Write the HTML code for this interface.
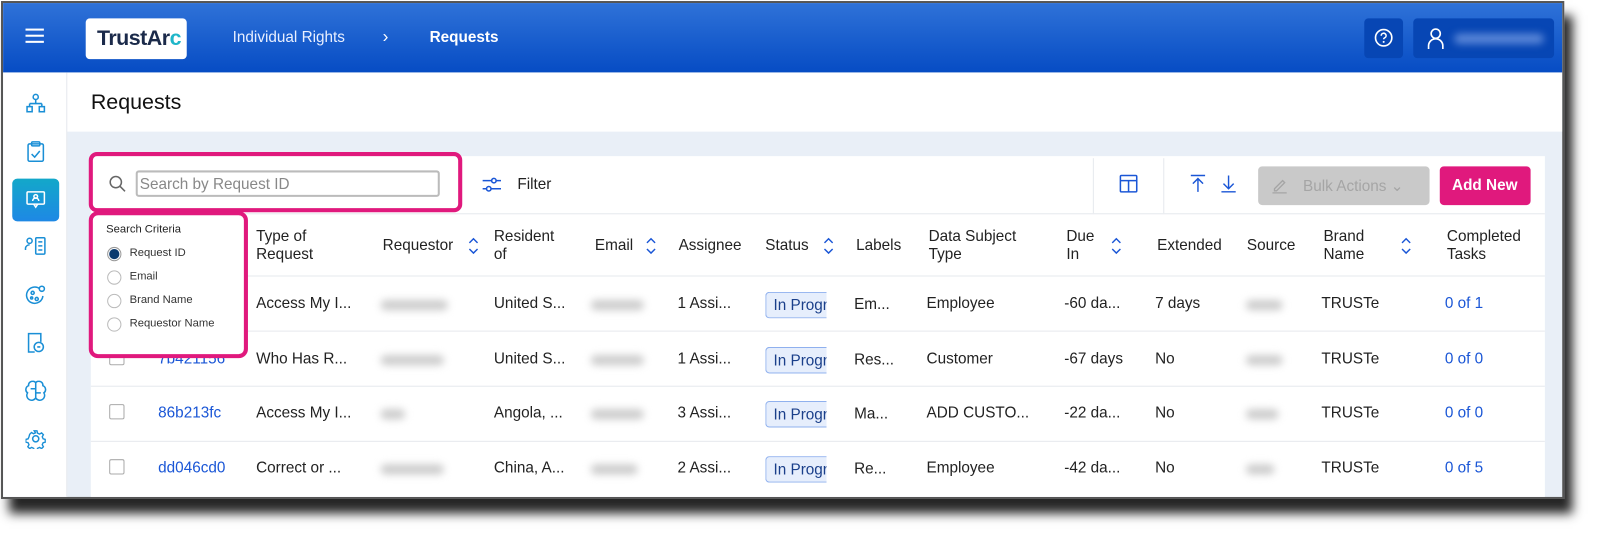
<!DOCTYPE html>
<html><head><meta charset="utf-8"><style>
*{box-sizing:border-box;margin:0;padding:0}
body{width:1600px;height:533px;background:#fff;font-family:"Liberation Sans",sans-serif;position:relative;overflow:hidden;color:#222}
#s{position:absolute;left:0;top:0;width:1568px;height:523px;transform:scale(1.0204);transform-origin:0 0}
.win{position:absolute;left:1px;top:1px;width:1532px;height:488px;background:#e9eff7;border:2px solid #555;box-shadow:8px 14px 10px rgba(0,0,0,.85);overflow:hidden}
.hdr{position:absolute;left:0;top:0;width:100%;height:68px;background:linear-gradient(#2f72d8,#064cc4)}
.a{position:absolute;white-space:nowrap}
.side{position:absolute;left:0;top:68px;width:63px;height:420px;background:#fff;border-right:1px solid #e2e6ec}
.ttl{position:absolute;left:63px;top:68px;right:0;height:58px;background:#fff}
.card{position:absolute;left:86px;top:150px;width:1425px;height:340px;background:#fff}
.row{position:absolute;left:86px;width:1425px;border-top:1px solid #e6e9ee}
.t{font-size:15px;color:#222}
.h{font-size:15px;color:#222;line-height:18px}
.lk{color:#1a56d6}
.blur{position:absolute;height:10px;background:#ccc;filter:blur(4px);border-radius:5px}
.pill{position:absolute;width:60px;height:26px;border:1px solid #8fb0ee;border-right:none;background:#e6eefc;border-radius:4px 0 0 4px;color:#1a3f8a;font-size:15px;padding:4px 0 0 7px;overflow:hidden;white-space:nowrap}
.cb{position:absolute;left:104px;width:15px;height:15px;border:1px solid #aaa;border-radius:2px;background:#fff}
.rad{position:absolute;left:102px;width:14px;height:14px;border:1px solid #bbb;border-radius:50%;background:#fff}
.ic{position:absolute}
</style></head><body><div id="s">
<div class="win">
 <div class="hdr">
  <div class="a" style="left:22px;top:25px;width:18px;height:2px;background:#fff;box-shadow:0 6px 0 #fff,0 12px 0 #fff"></div>
  <div class="a" style="left:81px;top:15px;width:99px;height:40px;background:#fff;border-radius:4px;font-size:21px;font-weight:bold;color:#1b2a4a;padding:8px 0 0 11px;letter-spacing:-0.5px">TrustAr<span style="color:#1fb6c9">c</span></div>
  <div class="a" style="left:225px;top:25px;color:#e8efff;font-size:15px">Individual Rights</div>
  <div class="a" style="left:372px;top:23px;color:#fff;font-size:17px">&#8250;</div>
  <div class="a" style="left:418px;top:25px;color:#fff;font-size:15px;font-weight:bold">Requests</div>
  <div class="a" style="left:1334px;top:15px;width:38px;height:39px;background:#0746b4;border-radius:4px"></div>
  <svg class="a" style="left:1343px;top:24px" width="20" height="20" viewBox="0 0 20 20"><circle cx="10" cy="10" r="8" fill="none" stroke="#fff" stroke-width="1.6"/><path d="M7.6 8a2.4 2.4 0 1 1 3.2 2.2c-.6.3-.8.7-.8 1.3" fill="none" stroke="#fff" stroke-width="1.5"/><circle cx="10" cy="14" r="1" fill="#fff"/></svg>
  <div class="a" style="left:1382px;top:15px;width:138px;height:39px;background:#0746b4;border-radius:4px"></div>
  <svg class="a" style="left:1395px;top:24px" width="18" height="22" viewBox="0 0 18 22"><circle cx="9" cy="6" r="4.5" fill="none" stroke="#fff" stroke-width="1.6"/><path d="M2 21v-3a7 7 0 0 1 14 0v3" fill="none" stroke="#fff" stroke-width="1.6"/></svg>
  <div class="blur" style="left:1422px;top:30px;width:88px;background:#5b87d8"></div>
 </div>
 <div class="side">
  <svg class="ic" style="left:22px;top:20px" width="20" height="20" viewBox="0 0 20 20" fill="none" stroke="#1a8fd6" stroke-width="1.5"><circle cx="10" cy="4" r="2.5"/><path d="M10 6.5v4M4 10.5h12M4 10.5v3M16 10.5v3"/><rect x="1.5" y="13.5" width="5" height="5"/><rect x="13.5" y="13.5" width="5" height="5"/></svg>
  <svg class="ic" style="left:23px;top:67px" width="18" height="22" viewBox="0 0 18 22" fill="none" stroke="#1a8fd6" stroke-width="1.5"><rect x="1.5" y="3" width="15" height="17" rx="1.5"/><rect x="5" y="1" width="8" height="4" rx="1"/><path d="M5 13l3 3 5-6"/></svg>
  <div class="a" style="left:9px;top:104px;width:46px;height:42px;border-radius:5px;background:linear-gradient(#13a8c9,#1e88e5)"></div>
  <svg class="ic" style="left:22px;top:115px" width="20" height="20" viewBox="0 0 20 20" fill="none" stroke="#fff" stroke-width="1.5"><rect x="1.5" y="2" width="17" height="12" rx="1"/><circle cx="10" cy="6.5" r="1.8"/><path d="M7 11a3 3 0 0 1 6 0M8 14l2 3 2-3"/></svg>
  <svg class="ic" style="left:21px;top:160px" width="22" height="20" viewBox="0 0 22 20" fill="none" stroke="#1a8fd6" stroke-width="1.5"><circle cx="5" cy="5" r="2.5"/><path d="M1 14v-2a4 4 0 0 1 4-3"/><rect x="11" y="2" width="9" height="16" rx="1"/><path d="M13.5 6h4M13.5 10h4M13.5 14h4"/></svg>
  <svg class="ic" style="left:22px;top:208px" width="20" height="20" viewBox="0 0 20 20" fill="none" stroke="#1a8fd6" stroke-width="1.5"><path d="M14 4a8 8 0 1 0 3 7"/><circle cx="16" cy="4" r="2.5"/><circle cx="7" cy="8" r="1.5"/><circle cx="11" cy="14" r="1.5"/><circle cx="6" cy="13" r="1"/></svg>
  <svg class="ic" style="left:23px;top:254px" width="18" height="22" viewBox="0 0 18 22" fill="none" stroke="#1a8fd6" stroke-width="1.5"><path d="M8 20H2V2h12v8"/><circle cx="12" cy="15" r="4.5"/><path d="M10.5 15h3"/></svg>
  <svg class="ic" style="left:21px;top:302px" width="22" height="20" viewBox="0 0 22 20" fill="none" stroke="#1a8fd6" stroke-width="1.5"><path d="M11 2v16M11 2a4 4 0 0 0-7 3 4 4 0 0 0-1 7 4 4 0 0 0 8 5M11 2a4 4 0 0 1 7 3 4 4 0 0 1 1 7 4 4 0 0 1-8 5M6 8h5M11 12h5"/></svg>
  <svg class="ic" style="left:22px;top:349px" width="20" height="20" viewBox="0 0 20 20" fill="none" stroke="#1a8fd6" stroke-width="1.5"><circle cx="10" cy="10" r="3"/><path d="M8.5 1.5h3l.6 2.5 2.2 1 2.2-1.3 2 2-1.3 2.3 1 2.2 2.3.6v3l-2.3.6-1 2.2 1.3 2.2-2 2-2.2-1.3-2.2 1-.6 2.5h-3l-.6-2.5-2.2-1-2.2 1.3-2-2 1.3-2.2-1-2.2-2.5-.6v-3l2.5-.6 1-2.2L3.5 5.3l2-2 2.2 1.3 2.2-1z" transform="scale(.9) translate(1 1)"/></svg>
 </div>
 <div class="ttl"><div class="a" style="left:23px;top:18px;font-size:21px;color:#111">Requests</div></div>
 <div class="card"></div>
 <div class="a" style="left:84px;top:146px;width:366px;height:59px;border:4px solid #e0197d;border-radius:8px;background:#fff"></div>
 <svg class="ic" style="left:103px;top:168px" width="18" height="18" viewBox="0 0 18 18" fill="none" stroke="#666" stroke-width="1.5"><circle cx="7.5" cy="7.5" r="5.5"/><path d="M11.5 11.5l5 5"/></svg>
 <div class="a" style="left:130px;top:164px;width:298px;height:26px;border:2px solid #bbb;border-radius:3px;font-size:15px;color:#888;padding:3px 0 0 2px">Search by Request ID</div>
 <svg class="ic" style="left:469px;top:170px" width="20" height="16" viewBox="0 0 20 16" fill="none" stroke="#1a56d6" stroke-width="1.5"><path d="M1 4h18M1 12h18"/><circle cx="12" cy="4" r="2.2" fill="#fff"/><circle cx="7" cy="12" r="2.2" fill="#fff"/></svg>
 <div class="a t" style="left:504px;top:169px">Filter</div>
 <div class="a" style="left:1068px;top:152px;width:1px;height:54px;background:#e6e9ee"></div>
 <div class="a" style="left:1137px;top:152px;width:1px;height:54px;background:#e6e9ee"></div>
 <div class="a" style="left:86px;top:206px;width:1425px;height:1px;background:#e6e9ee"></div>
 <svg class="ic" style="left:1094px;top:168px" width="18" height="18" viewBox="0 0 18 18" fill="none" stroke="#1a56d6" stroke-width="1.5"><rect x="1" y="1" width="16" height="16" rx="1"/><path d="M1 6h16M9 6v11"/></svg>
 <svg class="ic" style="left:1163px;top:168px" width="16" height="18" viewBox="0 0 16 18" fill="none" stroke="#1a56d6" stroke-width="1.4"><path d="M1 1h14M8 4v13M3 9l5-5 5 5"/></svg>
 <svg class="ic" style="left:1193px;top:168px" width="16" height="18" viewBox="0 0 16 18" fill="none" stroke="#1a56d6" stroke-width="1.4"><path d="M1 17h14M8 1v13M3 9l5 5 5-5"/></svg>
 <div class="a" style="left:1230px;top:160px;width:168px;height:38px;background:#c9c9c9;border-radius:4px;color:#a5a5a5;font-size:15px;padding:10px 0 0 44px">Bulk Actions &#8964;</div>
 <svg class="ic" style="left:1243px;top:171px" width="16" height="16" viewBox="0 0 16 16" fill="none" stroke="#a5a5a5" stroke-width="1.3"><path d="M3 11l8-8 2 2-8 8H3zM1 15h14"/></svg>
 <div class="a" style="left:1408px;top:160px;width:89px;height:38px;background:#e0197d;border-radius:4px;color:#fff;font-size:15px;font-weight:bold;padding:10px 0 0 12px">Add New</div>
 <div class="a h" style="left:248px;top:220px">Type of<br>Request</div>
 <div class="a h" style="left:372px;top:229px">Requestor</div>
 <div class="a h" style="left:481px;top:220px">Resident<br>of</div>
 <div class="a h" style="left:580px;top:229px">Email</div>
 <div class="a h" style="left:662px;top:229px">Assignee</div>
 <div class="a h" style="left:747px;top:229px">Status</div>
 <div class="a h" style="left:836px;top:229px">Labels</div>
 <div class="a h" style="left:907px;top:220px">Data Subject<br>Type</div>
 <div class="a h" style="left:1042px;top:220px">Due<br>In</div>
 <div class="a h" style="left:1131px;top:229px">Extended</div>
 <div class="a h" style="left:1219px;top:229px">Source</div>
 <div class="a h" style="left:1294px;top:220px">Brand<br>Name</div>
 <div class="a h" style="left:1415px;top:220px">Completed<br>Tasks</div>
 <svg class="ic" style="left:455px;top:228px" width="12" height="20" viewBox="0 0 12 20" fill="none" stroke="#1a56d6" stroke-width="1.4"><path d="M2 7l4-4 4 4M2 13l4 4 4-4"/></svg>
 <svg class="ic" style="left:629px;top:228px" width="12" height="20" viewBox="0 0 12 20" fill="none" stroke="#1a56d6" stroke-width="1.4"><path d="M2 7l4-4 4 4M2 13l4 4 4-4"/></svg>
 <svg class="ic" style="left:803px;top:228px" width="12" height="20" viewBox="0 0 12 20" fill="none" stroke="#1a56d6" stroke-width="1.4"><path d="M2 7l4-4 4 4M2 13l4 4 4-4"/></svg>
 <svg class="ic" style="left:1085px;top:228px" width="12" height="20" viewBox="0 0 12 20" fill="none" stroke="#1a56d6" stroke-width="1.4"><path d="M2 7l4-4 4 4M2 13l4 4 4-4"/></svg>
 <svg class="ic" style="left:1369px;top:228px" width="12" height="20" viewBox="0 0 12 20" fill="none" stroke="#1a56d6" stroke-width="1.4"><path d="M2 7l4-4 4 4M2 13l4 4 4-4"/></svg>
 <div class="row" style="top:267px"></div><div class="row" style="top:321px"></div><div class="row" style="top:375px"></div><div class="row" style="top:429px"></div>
 <div class="cb" style="top:340px"></div><div class="cb" style="top:393px"></div><div class="cb" style="top:447px"></div>
 <div class="a t lk" style="left:152px;top:340px">7b421156</div>
 <div class="a t lk" style="left:152px;top:393px">86b213fc</div>
 <div class="a t lk" style="left:152px;top:447px;width:68px;overflow:hidden">dd046cd0</div>
 <div class="a t" style="left:248px;top:286px">Access My I...</div>
 <div class="a t" style="left:248px;top:340px">Who Has R...</div>
 <div class="a t" style="left:248px;top:393px">Access My I...</div>
 <div class="a t" style="left:248px;top:447px">Correct or ...</div>
 <div class="blur" style="left:370px;top:291px;width:66px"></div>
 <div class="blur" style="left:370px;top:345px;width:62px"></div>
 <div class="blur" style="left:370px;top:398px;width:24px"></div>
 <div class="blur" style="left:370px;top:452px;width:62px"></div>
 <div class="a t" style="left:481px;top:286px">United S...</div>
 <div class="a t" style="left:481px;top:340px">United S...</div>
 <div class="a t" style="left:481px;top:393px">Angola, ...</div>
 <div class="a t" style="left:481px;top:447px">China, A...</div>
 <div class="blur" style="left:576px;top:291px;width:52px"></div>
 <div class="blur" style="left:576px;top:345px;width:52px"></div>
 <div class="blur" style="left:576px;top:398px;width:52px"></div>
 <div class="blur" style="left:576px;top:452px;width:46px"></div>
 <div class="a t" style="left:661px;top:286px">1 Assi...</div>
 <div class="a t" style="left:661px;top:340px">1 Assi...</div>
 <div class="a t" style="left:661px;top:393px">3 Assi...</div>
 <div class="a t" style="left:661px;top:447px">2 Assi...</div>
 <div class="pill" style="left:747px;top:283px">In Progress</div>
 <div class="pill" style="left:747px;top:337px">In Progress</div>
 <div class="pill" style="left:747px;top:390px">In Progress</div>
 <div class="pill" style="left:747px;top:444px">In Progress</div>
 <div class="a t" style="left:834px;top:287px">Em...</div>
 <div class="a t" style="left:834px;top:341px">Res...</div>
 <div class="a t" style="left:834px;top:394px">Ma...</div>
 <div class="a t" style="left:834px;top:448px">Re...</div>
 <div class="a t" style="left:905px;top:286px">Employee</div>
 <div class="a t" style="left:905px;top:340px">Customer</div>
 <div class="a t" style="left:905px;top:393px">ADD CUSTO...</div>
 <div class="a t" style="left:905px;top:447px">Employee</div>
 <div class="a t" style="left:1040px;top:286px">-60 da...</div>
 <div class="a t" style="left:1040px;top:340px">-67 days</div>
 <div class="a t" style="left:1040px;top:393px">-22 da...</div>
 <div class="a t" style="left:1040px;top:447px">-42 da...</div>
 <div class="a t" style="left:1129px;top:286px">7 days</div>
 <div class="a t" style="left:1129px;top:340px">No</div>
 <div class="a t" style="left:1129px;top:393px">No</div>
 <div class="a t" style="left:1129px;top:447px">No</div>
 <div class="blur" style="left:1218px;top:291px;width:36px"></div>
 <div class="blur" style="left:1218px;top:345px;width:36px"></div>
 <div class="blur" style="left:1218px;top:398px;width:32px"></div>
 <div class="blur" style="left:1218px;top:452px;width:28px"></div>
 <div class="a t" style="left:1292px;top:286px">TRUSTe</div>
 <div class="a t" style="left:1292px;top:340px">TRUSTe</div>
 <div class="a t" style="left:1292px;top:393px">TRUSTe</div>
 <div class="a t" style="left:1292px;top:447px">TRUSTe</div>
 <div class="a t lk" style="left:1413px;top:286px">0 of 1</div>
 <div class="a t lk" style="left:1413px;top:340px">0 of 0</div>
 <div class="a t lk" style="left:1413px;top:393px">0 of 0</div>
 <div class="a t lk" style="left:1413px;top:447px">0 of 5</div>
 <div class="a" style="left:84px;top:204px;width:156px;height:144px;border:4px solid #e0197d;border-radius:9px;background:#fff"></div>
 <div class="a" style="left:101px;top:216px;font-size:11px;color:#222">Search Criteria</div>
 <div class="rad" style="top:239px;border-color:#999;background:radial-gradient(circle,#0b3a6e 55%,#fff 62%)"></div>
 <div class="a" style="left:124px;top:239px;font-size:11px;color:#333">Request ID</div>
 <div class="rad" style="top:262px"></div><div class="a" style="left:124px;top:262px;font-size:11px;color:#333">Email</div>
 <div class="rad" style="top:285px"></div><div class="a" style="left:124px;top:285px;font-size:11px;color:#333">Brand Name</div>
 <div class="rad" style="top:308px"></div><div class="a" style="left:124px;top:308px;font-size:11px;color:#333">Requestor Name</div>
</div>
</div></body></html>
